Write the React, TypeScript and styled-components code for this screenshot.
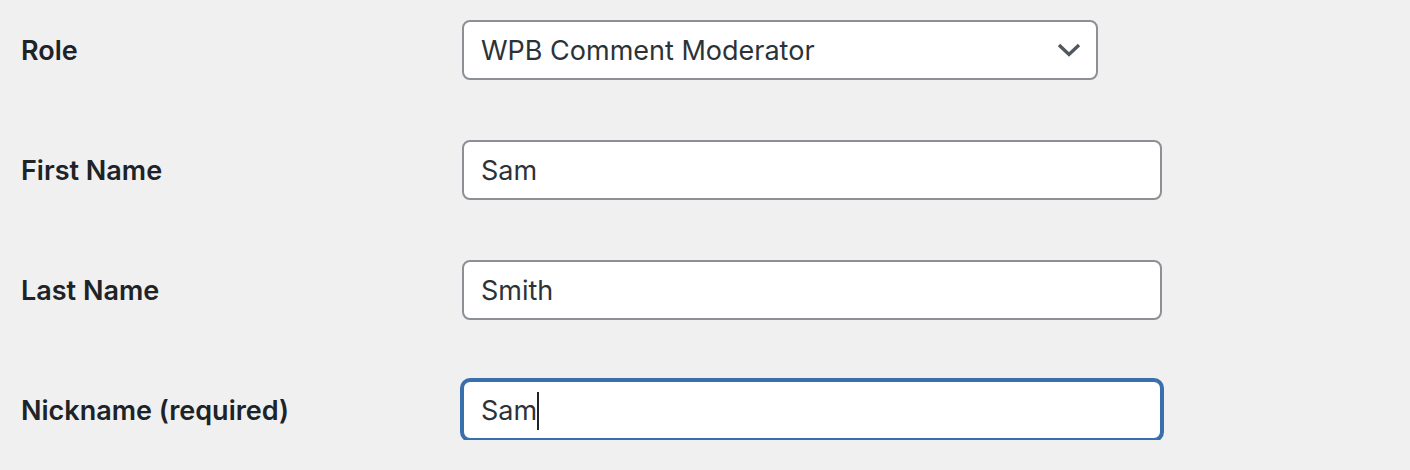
import * as React from 'react';
import styled, { createGlobalStyle } from 'styled-components';

const GlobalStyle = createGlobalStyle`
  html, body {
    margin: 0;
    padding: 0;
    background: #f0f0f1;
  }
  body {
    font-family: Inter, "Noto Sans", "Liberation Sans", sans-serif;
    color: #1d2327;
  }
`;

const FormTable = styled.div`
  display: grid;
  grid-template-columns: 441px 1fr;
  row-gap: 60px;
  padding: 20px 0 0 21px;
  width: 1410px;
  box-sizing: border-box;
`;

const Label = styled.label`
  display: flex;
  align-items: center;
  height: 60px;
  font-size: 27px;
  font-weight: 600;
  color: #1d2327;
`;

const Field = styled.div<{ $width: number; $focused?: boolean }>`
  position: relative;
  display: flex;
  align-items: center;
  box-sizing: border-box;
  width: ${p => p.$width}px;
  height: 60px;
  padding: 0 15px 0 17px;
  background: #fff;
  border: 2px solid ${p => (p.$focused ? '#3a6fae' : '#8c8f94')};
  border-radius: 8px;
  box-shadow: ${p => (p.$focused ? '0 0 0 2px #3a6fae' : 'none')};
  font-size: 27px;
  color: #2c3338;
`;

const Value = styled.span`
  flex: 1;
  display: flex;
  align-items: center;
  white-space: nowrap;
  padding-top: 1px;
`;

const Caret = styled.span`
  display: inline-block;
  width: 2px;
  height: 38px;
  background: #1d2327;
`;

const Chevron = styled.svg`
  width: 24px;
  height: 14px;
  flex-shrink: 0;
`;

const rows = [
  { label: 'Role', value: 'WPB Comment Moderator', select: true },
  { label: 'First Name', value: 'Sam' },
  { label: 'Last Name', value: 'Smith' },
  { label: 'Nickname (required)', value: 'Sam', focused: true },
];

const App: React.FC = () => {
  return (
    <>
      <GlobalStyle />
      <FormTable>
        {rows.map(r => (
          <React.Fragment key={r.label}>
            <Label>{r.label}</Label>
            <div>
              <Field $width={r.select ? 636 : 700} $focused={r.focused}>
                <Value>
                  {r.value}
                  {r.focused && <Caret />}
                </Value>
                {r.select && (
                  <Chevron viewBox="0 0 24 14">
                    <path d="M2 2 L12 11.5 L22 2" fill="none" stroke="#50575e" strokeWidth="3.4" />
                  </Chevron>
                )}
              </Field>
            </div>
          </React.Fragment>
        ))}
      </FormTable>
    </>
  );
};

export default App;
